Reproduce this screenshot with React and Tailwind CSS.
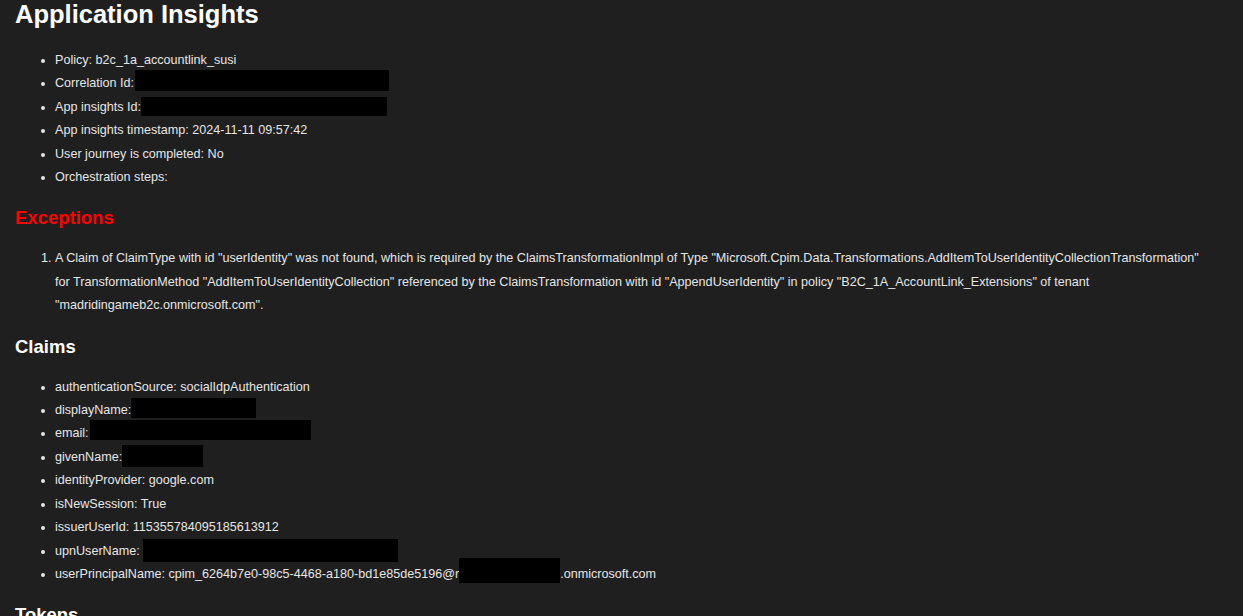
const font = { fontFamily: '"Liberation Sans", Arial, sans-serif' };

function Redact({ className }) {
  return <span className={`inline-block bg-black align-middle ${className}`} />;
}

export default function App() {
  return (
    <div className="min-h-screen bg-[#1f1f1f] text-[#e6e6e6] px-[15px] overflow-hidden" style={font}>
      <h1 className="text-[25.5px] leading-[28px] font-bold text-white">Application Insights</h1>

      <ul className="mt-[21px] list-disc pl-[40px] text-[12.6px] leading-[23.4px]">
        <li>Policy: b2c_1a_accountlink_susi</li>
        <li>
          Correlation Id:
          <Redact className="w-[254px] h-[21px] -mt-[10px] -mb-[2px] ml-[1px]" />
        </li>
        <li>
          App insights Id:
          <Redact className="w-[246px] h-[19px] -mt-[6px] -mb-[4px]" />
        </li>
        <li>App insights timestamp: 2024-11-11 09:57:42</li>
        <li>User journey is completed: No</li>
        <li>Orchestration steps:</li>
      </ul>

      <h2 className="mt-[17px] text-[18.5px] leading-[24px] font-bold text-[#ff0000]">Exceptions</h2>

      <ol className="mt-[17px] list-decimal pl-[40px] text-[12.6px] leading-[23.4px]">
        <li>
          A Claim of ClaimType with id "userIdentity" was not found, which is required by the ClaimsTransformationImpl of Type
          "Microsoft.Cpim.Data.Transformations.AddItemToUserIdentityCollectionTransformation"
          <br />
          for TransformationMethod "AddItemToUserIdentityCollection" referenced by the ClaimsTransformation with id
          "AppendUserIdentity" in policy "B2C_1A_AccountLink_Extensions" of tenant
          <br />
          "madridingameb2c.onmicrosoft.com".
        </li>
      </ol>

      <h2 className="mt-[17px] text-[18.5px] leading-[24px] font-bold text-white">Claims</h2>

      <ul className="mt-[17px] list-disc pl-[40px] text-[12.6px] leading-[23.4px]">
        <li>authenticationSource: socialIdpAuthentication</li>
        <li>
          displayName:
          <Redact className="w-[125px] h-[20px] -mt-[8px] -mb-[3px]" />
        </li>
        <li>
          email:
          <Redact className="w-[221px] h-[20px] -mt-[10px] -mb-[2px] ml-[1px]" />
        </li>
        <li>
          givenName:
          <Redact className="w-[81px] h-[22px] -mt-[7px] -mb-[4px]" />
        </li>
        <li>identityProvider: google.com</li>
        <li>isNewSession: True</li>
        <li>issuerUserId: 115355784095185613912</li>
        <li>
          upnUserName: <Redact className="w-[255px] h-[23px] -mt-[7px] -mb-[5px]" />
        </li>
        <li>
          userPrincipalName: cpim_6264b7e0-98c5-4468-a180-bd1e85de5196@r
          <Redact className="w-[101px] h-[25px] -mt-[12px] -mb-[4px]" />
          .onmicrosoft.com
        </li>
      </ul>

      <h2 className="mt-[17px] text-[18.5px] leading-[24px] font-bold text-white">Tokens</h2>
    </div>
  );
}
